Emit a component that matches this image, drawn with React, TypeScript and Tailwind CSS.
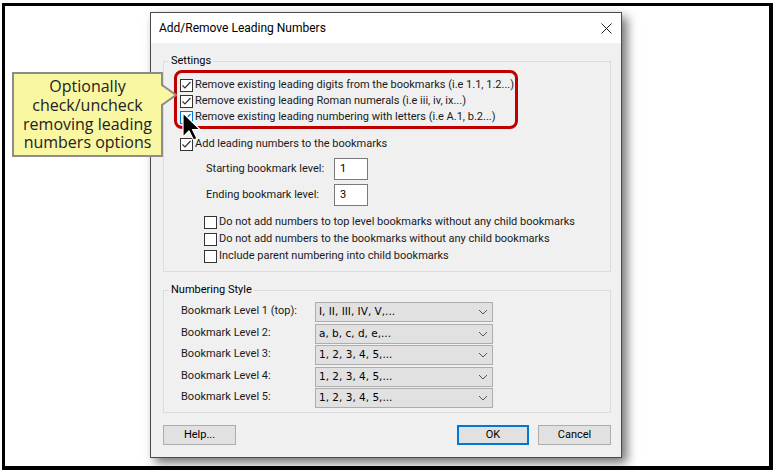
import React from 'react'

const Check = ({ checked = false, hover = false }: { checked?: boolean; hover?: boolean }) => (
  <span
    className={`w-[13px] h-[13px] shrink-0 bg-white border flex items-center justify-center ${
      hover ? 'border-[#0078d7]' : 'border-[#333333]'
    }`}
  >
    {checked && (
      <svg width="11" height="11" viewBox="0 0 11 11">
        <path
          d="M1.5 5.5 L4 8 L9.5 2"
          fill="none"
          stroke={hover ? '#0078d7' : '#333333'}
          strokeWidth="1.2"
        />
      </svg>
    )}
  </span>
)

function CheckRow({
  label,
  checked,
  hover,
  className = '',
}: {
  label: string
  checked?: boolean
  hover?: boolean
  className?: string
}) {
  return (
    <div className={`flex items-center gap-[2px] whitespace-nowrap ${className}`}>
      <Check checked={checked} hover={hover} />
      <span>{label}</span>
    </div>
  )
}

function Select({ value }: { value: string }) {
  return (
    <div className="w-[178px] h-[20px] bg-[#e1e1e1] border border-[#adadad] flex items-center justify-between pl-[3px] pr-[4px] font-['DejaVu_Sans',sans-serif] text-[10.5px] text-black">
      <span>{value}</span>
      <svg width="10" height="6" viewBox="0 0 10 6">
        <path d="M1 1 L5 5 L9 1" fill="none" stroke="#555" strokeWidth="1" />
      </svg>
    </div>
  )
}

export default function App() {
  const levels = [
    ['Bookmark Level 1 (top):', 'I, II, III, IV, V,...'],
    ['Bookmark Level 2:', 'a, b, c, d, e,...'],
    ['Bookmark Level 3:', '1, 2, 3, 4, 5,...'],
    ['Bookmark Level 4:', '1, 2, 3, 4, 5,...'],
    ['Bookmark Level 5:', '1, 2, 3, 4, 5,...'],
  ]

  return (
    <div className="w-[773px] h-[470px] bg-white pl-[2px] pt-[3px] overflow-hidden font-['Roboto',sans-serif] text-[11px] text-[#1a1a1a]">
      <div className="relative w-[771px] h-[467px] bg-white border-t-[3px] border-l-[3px] border-r-[4px] border-b-[4px] border-black pl-[145px] pt-[6px]">
        {/* dialog */}
        <div className="w-[472px] h-[446px] border border-[#4a4a4a] bg-[#f0f0f0] flex flex-col shadow-[5px_5px_10px_rgba(0,0,0,0.55)]">
          <div className="h-[30px] bg-white flex items-center justify-between pl-[8px] pr-[9px]">
            <span className="text-[12px] text-black">Add/Remove Leading Numbers</span>
            <svg width="11" height="11" viewBox="0 0 11 11">
              <path d="M0.5 0.5 L10.5 10.5 M10.5 0.5 L0.5 10.5" stroke="#222" strokeWidth="1" />
            </svg>
          </div>

          <div className="flex flex-col pl-[12px] pr-[10px] pt-[10px]">
            <fieldset className="border border-[#dcdcdc] pl-[10px] pr-[10px] pb-[6px] h-[219px]">
              <legend className="ml-[-5px] px-[2px] h-[16px] leading-[16px] text-black">Settings</legend>
              <div className="mt-[1px] w-[344px] h-[59px] border-[3px] border-[#c00000] rounded-[8px] pl-[3px] pt-[4px] flex flex-col">
                <CheckRow className="h-[16px]" checked label="Remove existing leading digits from the bookmarks (i.e 1.1, 1.2...)" />
                <CheckRow className="h-[16px]" checked label="Remove existing leading Roman numerals (i.e iii, iv, ix...)" />
                <CheckRow className="h-[16px]" checked hover label="Remove existing leading numbering with letters (i.e A.1, b.2...)" />
              </div>
              <CheckRow className="h-[16px] mt-[7px] ml-[6px]" checked label="Add leading numbers to the bookmarks" />
              <div className="flex items-center ml-[32px] mt-[6px] whitespace-nowrap">
                <span className="w-[128px]">Starting bookmark level:</span>
                <div className="w-[34px] h-[22px] bg-white border border-[#7a7a7a] pl-[5px] pt-[2px] text-black">1</div>
              </div>
              <div className="flex items-center ml-[32px] mt-[4px] whitespace-nowrap">
                <span className="w-[128px]">Ending bookmark level:</span>
                <div className="w-[34px] h-[22px] bg-white border border-[#7a7a7a] pl-[5px] pt-[2px] text-black">3</div>
              </div>
              <div className="flex flex-col ml-[30px] mt-[8px]">
                <CheckRow className="h-[17px]" label="Do not add numbers to top level bookmarks without any child bookmarks" />
                <CheckRow className="h-[17px]" label="Do not add numbers to the bookmarks without any child bookmarks" />
                <CheckRow className="h-[17px]" label="Include parent numbering into child bookmarks" />
              </div>
            </fieldset>

            <fieldset className="border border-[#dcdcdc] pl-[17px] pr-[10px] pb-[4px] mt-[10px]">
              <legend className="ml-[-12px] px-[2px] h-[16px] leading-[16px] text-black">Numbering Style</legend>
              <div className="flex flex-col gap-[1.5px] mt-[4px]">
                {levels.map(([label, value]) => (
                  <div key={label} className="flex items-center h-[20px] whitespace-nowrap">
                    <span className="w-[134px] -mt-[1px]">{label}</span>
                    <Select value={value} />
                  </div>
                ))}
              </div>
            </fieldset>

            <div className="flex items-center mt-[12px] text-black">
              <button className="w-[73px] h-[20px] bg-[#e1e1e1] border border-[#adadad]">Help...</button>
              <button className="w-[72px] h-[20px] bg-[#e1e1e1] border-2 border-[#0078d7] ml-auto">OK</button>
              <button className="w-[73px] h-[20px] bg-[#e1e1e1] border border-[#adadad] ml-[9px]">Cancel</button>
            </div>
          </div>
        </div>

        {/* callout */}
        <div className="absolute left-[7px] top-[66px] w-[151px] h-[85px] bg-[#f9f7a1] border-2 border-[#8c8c8c] flex flex-col items-center justify-center font-['Open_Sans',sans-serif] text-[16px] leading-[18.7px] text-[#222]">
          <span>Optionally</span>
          <span>check/uncheck</span>
          <span>removing leading</span>
          <span>numbers options</span>
        </div>
        <svg className="absolute left-[155px] top-[76px]" width="18" height="26" viewBox="0 0 18 26">
          <polygon points="0,3 16,13 0,23" fill="#f9f7a1" />
          <polyline points="2,3 16,13 2,23" fill="none" stroke="#8c8c8c" strokeWidth="2" />
        </svg>

        {/* mouse cursor */}
        <svg className="absolute left-[177px] top-[106px]" width="20" height="32" viewBox="-1 -1 20 32">
          <path
            d="M0 0 L0 24 L6 18 L10.5 27 L14 25.5 L9.5 16.5 L17 16.5 Z"
            fill="#000"
            stroke="#fff"
            strokeWidth="1.2"
            strokeLinejoin="round"
          />
        </svg>
      </div>
    </div>
  )
}
